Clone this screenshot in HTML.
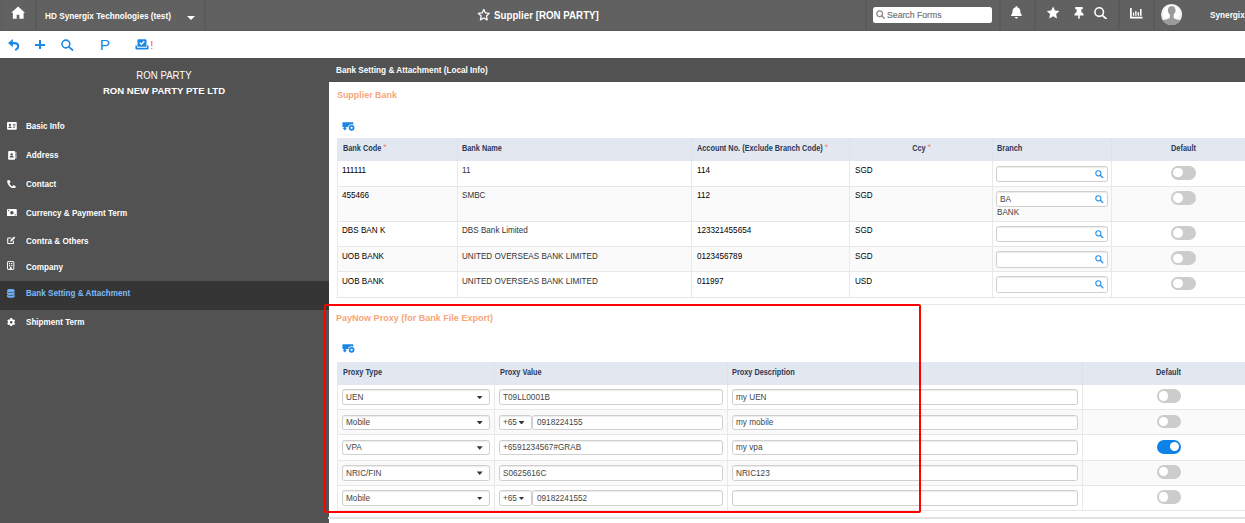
<!DOCTYPE html>
<html><head><meta charset="utf-8">
<style>
*{box-sizing:border-box;margin:0;padding:0}
html,body{width:1245px;height:523px;overflow:hidden;background:#fff;font-family:"Liberation Sans",sans-serif;}
.abs{position:absolute}
#top{left:0;top:0;width:1245px;height:30.700px;background:#616161;border-bottom:1.200px solid #5a5a5a}
.vd{position:absolute;top:0;width:2px;height:30.700px;background:#5a5a5a}
.tt{position:absolute;color:#fff;font-weight:bold;white-space:nowrap;transform-origin:0 50%}
#side{left:0;top:58px;width:328.700px;height:465px;background:#525252}
.mi{position:absolute;left:25.600px;color:#fff;font-weight:bold;font-size:9px;white-space:nowrap;transform-origin:0 50%;transform:scaleX(.90);line-height:12px}
#hdr{left:328px;top:58px;width:917px;height:24.400px;background:#525252}
table{border-collapse:collapse;position:absolute;table-layout:fixed;font-size:9px;color:#222}
th{background:#e3e7f0;color:#1f2d4d;font-weight:bold;text-align:left;font-size:8.5px;padding:0 0 0 5px;vertical-align:middle}
td{border:1px solid #e4e4e4;vertical-align:top;padding:5px 0 0 5px;font-size:8.5px;color:#111}
tr.alt td{background:#fafafa}
.req{color:#e53935;font-weight:normal;font-size:7px;vertical-align:1px}
.inp{position:absolute;border:1px solid #c9c9c9;border-radius:2px;background:#fff;box-shadow:inset 0 1px 1px rgba(0,0,0,.08);font-size:8.5px;color:#222;line-height:14px;padding-left:4px;white-space:nowrap}
.tg{position:absolute;width:25px;height:13px;border-radius:7px;background:#ccc}
.tg:after{content:"";position:absolute;left:1.5px;top:1.5px;width:10px;height:10px;border-radius:5px;background:#fff}
.tg.on{background:#1e88e5}
.tg.on:after{left:13.5px}
.car{position:absolute;width:0;height:0;border-left:3px solid transparent;border-right:3px solid transparent;border-top:3.5px solid #222}
</style><style>
.t,.th,.td{white-space:nowrap;line-height:11px;transform-origin:0 50%}
.th{font-size:8.200px;font-weight:bold;color:#2a3757;transform:scaleX(.895)}
.th .req{font-size:9px;color:#f2777a;line-height:0;position:relative;top:-1.500px;vertical-align:baseline;font-weight:normal}
.td{font-size:8.500px;color:#333;transform:scaleX(.955)}
.td.b{color:#000}
.inp span{transform-origin:0 50%;transform:scaleX(.965);line-height:11px}
.inp{border-radius:2.500px;border-color:#cfcfcf}
.tg:after{left:2.200px;top:2.200px;width:9.400px;height:9.400px}
.tg.on{background:#0f82e8}
.tg.on:after{left:13.100px}
.car2{position:absolute;width:6px;height:3.500px;background:#333;clip-path:polygon(0 0,100% 0,50% 100%)}
.inp{color:#444}
.car{border-left-width:2.900px;border-right-width:2.900px;border-top-width:3.300px;border-top-color:#333}
</style></head><body>
<!-- TOP BAR -->
<div id="top" class="abs">
 <div class="vd" style="left:35px;width:1.500px"></div><div class="vd" style="left:0.700px;width:1px;background:#5c5c5c"></div><div class="vd" style="left:204px"></div>
 <div class="vd" style="left:864.6px"></div><div class="vd" style="left:998.6px"></div><div class="vd" style="left:1033.7px"></div><div class="vd" style="left:1117.6px"></div><div class="vd" style="left:1153px"></div>
 <svg class="abs" style="left:11.200px;top:6.300px" width="14.200" height="12.800" viewBox="0 0 14.200 12.800"><path fill="#fff" d="M7.100 .5 L.2 6.700 H1.900 V12.700 H5.700 V8.800 H8.400 V12.700 H12.600 V6.700 H14 Z"/></svg>
 <div class="tt" style="left:45.200px;top:9.800px;font-size:10px;line-height:12px;transform:scale(.822,.92)">HD Synergix Technologies (test)</div>
 <div class="abs" style="left:186.5px;top:15.500px;width:0;height:0;border-left:4px solid transparent;border-right:4px solid transparent;border-top:4.500px solid #fff"></div>
 <svg class="abs" style="left:476.600px;top:8.100px" width="13.600" height="13.600" viewBox="0 0 24 24"><path fill="none" stroke="#fff" stroke-width="2.200" stroke-linejoin="round" d="M12 2.500l2.900 6.200 6.800.8-5 4.700 1.300 6.700L12 17.600l-6 3.300 1.300-6.700-5-4.700 6.800-.8z"/></svg>
 <div class="tt" style="left:493.5px;top:9px;font-size:10.5px;line-height:13px;transform:scaleX(.928)">Supplier [RON PARTY]</div>
 <div class="abs" style="left:873px;top:7.100px;width:119px;height:15.500px;background:#fff;border-radius:2.500px"></div>
 <svg class="abs" style="left:875.700px;top:10.200px" width="9" height="9" viewBox="0 0 9 9"><circle cx="3.700" cy="3.700" r="2.900" fill="none" stroke="#858585" stroke-width="1.300"/><path d="M5.900 5.900 8.200 8.300" stroke="#858585" stroke-width="1.300" stroke-linecap="round"/></svg>
 <div class="abs" style="left:887.300px;top:8.800px;font-size:9.500px;line-height:12px;color:#707070;transform-origin:0 50%;transform:scaleX(.915);white-space:nowrap;-webkit-text-stroke:.15px #707070">Search Forms</div>
 <!-- bell -->
 <svg class="abs" style="left:1010.900px;top:6.300px" width="10.800" height="12.500" viewBox="0 0 448 512"><path fill="#fff" d="M224 512c35 0 64-29 64-64H160c0 35 29 64 64 64zm215-150c-19-21-55-52-55-154 0-78-54-140-128-155V32a32 32 0 1 0-64 0v21C118 68 64 130 64 208c0 102-36 133-55 154-6 6-9 14-9 22 0 16 13 32 32 32h384c19 0 32-16 32-32 0-8-3-16-9-22z"/></svg>
 <!-- star -->
 <svg class="abs" style="left:1046.100px;top:6.300px" width="14.200" height="13.200" viewBox="0 0 24 23"><path fill="#fff" d="M12 .8l3.300 7 7.700.9-5.700 5.300 1.500 7.600L12 17.800l-6.800 3.800 1.500-7.600L1 8.700l7.700-.9z"/></svg>
 <!-- pin -->
 <svg class="abs" style="left:1073.800px;top:6.800px" width="10" height="12.300" viewBox="0 0 384 512"><path fill="#fff" d="M298 214 285 96h43c13 0 24-11 24-24V24c0-13-11-24-24-24H56C43 0 32 11 32 24v48c0 13 11 24 24 24h43L86 214C37 237 0 278 0 328c0 13 11 24 24 24h136v104c0 1 0 3 1 4l24 48c3 6 11 6 14 0l24-48c1-1 1-3 1-4V352h136c13 0 24-11 24-24 0-51-38-91-86-114z"/></svg>
 <!-- search -->
 <svg class="abs" style="left:1094.200px;top:7.200px" width="12.600" height="12.200" viewBox="0 0 12.600 12.200"><circle cx="5.200" cy="5.100" r="4.300" fill="none" stroke="#fff" stroke-width="1.550"/><path d="M8.400 8.300 12 11.600" stroke="#fff" stroke-width="1.800" stroke-linecap="round"/></svg>
 <!-- chart -->
 <svg class="abs" style="left:1130px;top:8px" width="12.500" height="10.500" viewBox="0 0 25 21"><path fill="none" stroke="#fff" stroke-width="3.400" d="M1.800 0v19.200H25"/><path fill="#fff" d="M5.800 9h2.600v6.400H5.800zM10.400 5.800h2.600v9.600h-2.600zM15.200 8.400h3v7h-3zM20 2h3.200v13.400H20z"/></svg>
 <!-- avatar -->
 <svg class="abs" style="left:1161.100px;top:4.400px" width="21.100" height="21.100" viewBox="0 0 42 42"><defs><clipPath id="c"><circle cx="21" cy="21" r="21"/></clipPath><radialGradient id="g" cx="50%" cy="45%" r="55%"><stop offset="60%" stop-color="#fff"/><stop offset="100%" stop-color="#e4e4e4"/></radialGradient></defs><circle cx="21" cy="21" r="21" fill="url(#g)"/><g clip-path="url(#c)" fill="#9a9a9a"><ellipse cx="21.300" cy="12.700" rx="7.700" ry="8.900"/><path d="M17.400 17h7.800v10.500c1 2.500 8 3.200 13.300 5.500V44H3.500V33c5.300-2.300 12.900-3 13.900-5.500z"/></g></svg>
 <div class="tt" style="left:1209.800px;top:8.800px;font-size:10px;line-height:12px;transform:scale(.822,.92)">Synergix</div>
</div>
<!-- TOOLBAR -->
<svg class="abs" style="left:8px;top:39px" width="12" height="11.500" viewBox="0 0 12 11.500"><path fill="#1e88e5" d="M0 4.100 4.900 0v8.200z"/><path d="M4.500 4.100H6.300C9.300 4.100 10.200 6 10.200 7.300 10.200 8.800 9.300 9.900 7.900 10.600" fill="none" stroke="#1e88e5" stroke-width="2.100" stroke-linecap="round"/></svg>
<div class="abs" style="left:35.300px;top:44.200px;width:9.700px;height:1.500px;background:#1e88e5"></div><div class="abs" style="left:39.400px;top:40.300px;width:1.500px;height:9.200px;background:#1e88e5"></div>
<svg class="abs" style="left:60.500px;top:39px" width="13" height="12" viewBox="0 0 13 12"><circle cx="4.900" cy="5" r="3.900" fill="none" stroke="#1e88e5" stroke-width="1.600"/><path d="M7.800 7.800 11.500 11" stroke="#1e88e5" stroke-width="1.700" stroke-linecap="round"/></svg>
<div class="abs" style="left:99.700px;top:37.200px;font-size:15.500px;line-height:16px;color:#1e88e5">P</div>
<svg class="abs" style="left:134.500px;top:38.800px" width="14" height="11" viewBox="0 0 14 11"><rect x="2.500" y="0.200" width="9" height="7.500" rx="1" fill="#1e88e5"/><path d="M1.300 6.500V9.600H12.700V6.500" fill="none" stroke="#1e88e5" stroke-width="1.700" stroke-linejoin="round"/><path d="M4.800 3.600 6.400 5.200 9.300 2.200" fill="none" stroke="#fff" stroke-width="1.300"/></svg>
<div class="abs" style="left:150.200px;top:39.500px;font-size:11px;line-height:11px;color:#ef5350">!</div>
<!-- SIDEBAR -->
<div id="side" class="abs">
 <div class="abs" style="left:0;top:11.700px;width:328px;text-align:center;color:#fff;font-size:10px;line-height:12px;transform:scaleX(.962)">RON PARTY</div>
 <div class="abs" style="left:0;top:26.700px;width:328px;text-align:center;color:#fff;font-size:9.500px;line-height:12px;font-weight:bold;transform:scaleX(1.006)">RON NEW PARTY PTE LTD</div>
 <div class="abs" style="left:0;top:222.600px;width:328.700px;height:29px;background:#353535"></div>
 <div class="mi" style="top:62.200px">Basic Info</div>
 <div class="mi" style="top:90.500px">Address</div>
 <div class="mi" style="top:120px">Contact</div>
 <div class="mi" style="top:148.500px">Currency &amp; Payment Term</div>
 <div class="mi" style="top:177.100px">Contra &amp; Others</div>
 <div class="mi" style="top:202.900px">Company</div>
 <div class="mi" style="top:229.400px;color:#7cbcf7">Bank Setting &amp; Attachment</div>
 <div class="mi" style="top:258px;left:26.300px">Shipment Term</div>
</div>
<!-- MAIN -->
<div id="hdr" class="abs"><div class="tt" style="left:7.800px;top:5.600px;font-size:9px;line-height:12px;transform:scaleX(.911)">Bank Setting &amp; Attachment (Local Info)</div></div>
<div class="abs" style="left:337px;top:88.400px;font-size:9.500px;line-height:13px;color:#f7a67a;font-weight:bold;transform-origin:0 50%;transform:scaleX(.937);white-space:nowrap">Supplier Bank</div>
<div class="abs" style="left:336.300px;top:310.700px;font-size:9.500px;line-height:13px;color:#f7a67a;font-weight:bold;transform-origin:0 50%;transform:scaleX(.95);white-space:nowrap">PayNow Proxy (for Bank File Export)</div>
<svg class="abs" style="left:341.5px;top:121.5px" width="13" height="9" viewBox="0 0 13 9"><rect x=".4" y=".2" width="10.900" height="4.700" rx=".6" fill="#1a86e8"/><circle cx="9.600" cy="5.800" r="3.600" fill="#fff"/><circle cx="9.600" cy="5.800" r="2" fill="none" stroke="#1a86e8" stroke-width="1.700"/><path d="M.5 5.700H5L2.750 8.600z" fill="#1a86e8"/><rect x="2" y="4.500" width="1.500" height="1.500" fill="#1a86e8"/></svg>
<svg class="abs" style="left:341.6px;top:343.7px" width="13" height="9" viewBox="0 0 13 9"><rect x=".4" y=".2" width="10.900" height="4.700" rx=".6" fill="#1a86e8"/><circle cx="9.600" cy="5.800" r="3.600" fill="#fff"/><circle cx="9.600" cy="5.800" r="2" fill="none" stroke="#1a86e8" stroke-width="1.700"/><path d="M.5 5.700H5L2.750 8.600z" fill="#1a86e8"/><rect x="2" y="4.500" width="1.500" height="1.500" fill="#1a86e8"/></svg>
<div class="abs " style="left:328px;top:304px;width:917px;height:1px;background:#e6e6e6"></div>
<div class="abs " style="left:337.1px;top:138.1px;width:907.9px;height:22.80000000000001px;background:#e3e7f0"></div>
<div class="abs " style="left:337.1px;top:160.9px;width:907.9px;height:25.19999999999999px;background:#fff"></div>
<div class="abs " style="left:337.1px;top:186.1px;width:907.9px;height:35.0px;background:#fafafa"></div>
<div class="abs " style="left:337.1px;top:221.1px;width:907.9px;height:25.30000000000001px;background:#fff"></div>
<div class="abs " style="left:337.1px;top:246.4px;width:907.9px;height:25.299999999999983px;background:#fafafa"></div>
<div class="abs " style="left:337.1px;top:271.7px;width:907.9px;height:25.30000000000001px;background:#fff"></div>
<div class="abs " style="left:337.1px;top:185.6px;width:907.9px;height:1px;background:#e7e7e7"></div>
<div class="abs " style="left:337.1px;top:220.6px;width:907.9px;height:1px;background:#e7e7e7"></div>
<div class="abs " style="left:337.1px;top:245.9px;width:907.9px;height:1px;background:#e7e7e7"></div>
<div class="abs " style="left:337.1px;top:271.2px;width:907.9px;height:1px;background:#e7e7e7"></div>
<div class="abs " style="left:337.1px;top:296.5px;width:907.9px;height:1px;background:#e7e7e7"></div>
<div class="abs " style="left:337.1px;top:160.9px;width:1px;height:136.1px;background:#e9e9e9"></div>
<div class="abs " style="left:456.8px;top:160.9px;width:1px;height:136.1px;background:#e9e9e9"></div>
<div class="abs " style="left:690.8px;top:160.9px;width:1px;height:136.1px;background:#e9e9e9"></div>
<div class="abs " style="left:848.6px;top:160.9px;width:1px;height:136.1px;background:#e9e9e9"></div>
<div class="abs " style="left:991.8px;top:160.9px;width:1px;height:136.1px;background:#e9e9e9"></div>
<div class="abs " style="left:1110.8px;top:160.9px;width:1px;height:136.1px;background:#e9e9e9"></div>
<div class="abs " style="left:456.8px;top:138.1px;width:1px;height:22.80000000000001px;background:#dde1ea"></div>
<div class="abs " style="left:690.8px;top:138.1px;width:1px;height:22.80000000000001px;background:#dde1ea"></div>
<div class="abs " style="left:848.6px;top:138.1px;width:1px;height:22.80000000000001px;background:#dde1ea"></div>
<div class="abs " style="left:991.8px;top:138.1px;width:1px;height:22.80000000000001px;background:#dde1ea"></div>
<div class="abs " style="left:1110.8px;top:138.1px;width:1px;height:22.80000000000001px;background:#dde1ea"></div>
<div class="abs th" style="left:342.6px;top:143.0px;">Bank Code <span class="req">*</span></div>
<div class="abs th" style="left:461.9px;top:143.0px;">Bank Name</div>
<div class="abs th" style="left:696.7px;top:143.0px;">Account No. (Exclude Branch Code) <span class="req">*</span></div>
<div class="abs th" style="left:849.5px;top:143.0px;width:143px;text-align:center;transform-origin:50% 50%">Ccy <span class="req">*</span></div>
<div class="abs th" style="left:997.1px;top:143.0px;">Branch</div>
<div class="abs th" style="left:1112px;top:143.0px;width:143px;text-align:center;transform-origin:50% 50%">Default</div>
<div class="abs td b" style="left:342.2px;top:165.20000000000002px;">111111</div>
<div class="abs td" style="left:461.9px;top:165.20000000000002px;">11</div>
<div class="abs td b" style="left:696.7px;top:165.20000000000002px;">114</div>
<div class="abs td b" style="left:854.8px;top:165.20000000000002px;">SGD</div>
<div class="abs inp" style="left:996.1px;top:165.5px;width:112.4px;height:16.5px;"><span style="position:absolute;left:3.200px;top:2.600px"></span><svg class="abs" style="right:3.800px;top:3px" width="8.500" height="8.500" viewBox="0 0 24 24"><circle cx="9.500" cy="9.500" r="7.300" fill="none" stroke="#2a8fe8" stroke-width="3"/><path d="M15 15 22 22" stroke="#2a8fe8" stroke-width="3.800" stroke-linecap="round"/></svg></div>
<div class="abs tg" style="left:1171.2px;top:165.9px;width:24.6px;height:13.8px;"></div>
<div class="abs td b" style="left:342.2px;top:190.4px;">455466</div>
<div class="abs td" style="left:461.9px;top:190.4px;">SMBC</div>
<div class="abs td b" style="left:696.7px;top:190.4px;">112</div>
<div class="abs td b" style="left:854.8px;top:190.4px;">SGD</div>
<div class="abs inp" style="left:996.1px;top:190.7px;width:112.4px;height:16.5px;"><span style="position:absolute;left:3.200px;top:2.600px">BA</span><svg class="abs" style="right:3.800px;top:3px" width="8.500" height="8.500" viewBox="0 0 24 24"><circle cx="9.500" cy="9.500" r="7.300" fill="none" stroke="#2a8fe8" stroke-width="3"/><path d="M15 15 22 22" stroke="#2a8fe8" stroke-width="3.800" stroke-linecap="round"/></svg></div>
<div class="abs tg" style="left:1171.2px;top:191.1px;width:24.6px;height:13.8px;"></div>
<div class="abs td b" style="left:342.2px;top:225.4px;">DBS BAN K</div>
<div class="abs td" style="left:461.9px;top:225.4px;">DBS Bank Limited</div>
<div class="abs td b" style="left:696.7px;top:225.4px;">123321455654</div>
<div class="abs td b" style="left:854.8px;top:225.4px;">SGD</div>
<div class="abs inp" style="left:996.1px;top:225.7px;width:112.4px;height:16.5px;"><span style="position:absolute;left:3.200px;top:2.600px"></span><svg class="abs" style="right:3.800px;top:3px" width="8.500" height="8.500" viewBox="0 0 24 24"><circle cx="9.500" cy="9.500" r="7.300" fill="none" stroke="#2a8fe8" stroke-width="3"/><path d="M15 15 22 22" stroke="#2a8fe8" stroke-width="3.800" stroke-linecap="round"/></svg></div>
<div class="abs tg" style="left:1171.2px;top:226.1px;width:24.6px;height:13.8px;"></div>
<div class="abs td b" style="left:342.2px;top:250.70000000000002px;">UOB BANK</div>
<div class="abs td" style="left:461.9px;top:250.70000000000002px;">UNITED OVERSEAS BANK LIMITED</div>
<div class="abs td b" style="left:696.7px;top:250.70000000000002px;">0123456789</div>
<div class="abs td b" style="left:854.8px;top:250.70000000000002px;">SGD</div>
<div class="abs inp" style="left:996.1px;top:251.0px;width:112.4px;height:16.5px;"><span style="position:absolute;left:3.200px;top:2.600px"></span><svg class="abs" style="right:3.800px;top:3px" width="8.500" height="8.500" viewBox="0 0 24 24"><circle cx="9.500" cy="9.500" r="7.300" fill="none" stroke="#2a8fe8" stroke-width="3"/><path d="M15 15 22 22" stroke="#2a8fe8" stroke-width="3.800" stroke-linecap="round"/></svg></div>
<div class="abs tg" style="left:1171.2px;top:251.4px;width:24.6px;height:13.8px;"></div>
<div class="abs td b" style="left:342.2px;top:276.0px;">UOB BANK</div>
<div class="abs td" style="left:461.9px;top:276.0px;">UNITED OVERSEAS BANK LIMITED</div>
<div class="abs td b" style="left:696.7px;top:276.0px;">011997</div>
<div class="abs td b" style="left:854.8px;top:276.0px;">USD</div>
<div class="abs inp" style="left:996.1px;top:276.3px;width:112.4px;height:16.5px;"><span style="position:absolute;left:3.200px;top:2.600px"></span><svg class="abs" style="right:3.800px;top:3px" width="8.500" height="8.500" viewBox="0 0 24 24"><circle cx="9.500" cy="9.500" r="7.300" fill="none" stroke="#2a8fe8" stroke-width="3"/><path d="M15 15 22 22" stroke="#2a8fe8" stroke-width="3.800" stroke-linecap="round"/></svg></div>
<div class="abs tg" style="left:1171.2px;top:276.7px;width:24.6px;height:13.8px;"></div>
<div class="abs td" style="left:997.1px;top:206.7px;color:#444">BANK</div>
<div class="abs " style="left:337.1px;top:361.6px;width:907.9px;height:23.0px;background:#e3e7f0"></div>
<div class="abs " style="left:337.1px;top:384.6px;width:907.9px;height:25.099999999999966px;background:#fff"></div>
<div class="abs " style="left:337.1px;top:409.7px;width:907.9px;height:25.19999999999999px;background:#fafafa"></div>
<div class="abs " style="left:337.1px;top:434.9px;width:907.9px;height:25.200000000000045px;background:#fff"></div>
<div class="abs " style="left:337.1px;top:460.1px;width:907.9px;height:25.299999999999955px;background:#fafafa"></div>
<div class="abs " style="left:337.1px;top:485.4px;width:907.9px;height:25.100000000000023px;background:#fff"></div>
<div class="abs " style="left:337.1px;top:409.2px;width:907.9px;height:1px;background:#e7e7e7"></div>
<div class="abs " style="left:337.1px;top:434.4px;width:907.9px;height:1px;background:#e7e7e7"></div>
<div class="abs " style="left:337.1px;top:459.6px;width:907.9px;height:1px;background:#e7e7e7"></div>
<div class="abs " style="left:337.1px;top:484.9px;width:907.9px;height:1px;background:#e7e7e7"></div>
<div class="abs " style="left:337.1px;top:510.0px;width:907.9px;height:1px;background:#e7e7e7"></div>
<div class="abs " style="left:337.1px;top:384.6px;width:1px;height:125.89999999999998px;background:#e9e9e9"></div>
<div class="abs " style="left:494.1px;top:384.6px;width:1px;height:125.89999999999998px;background:#e9e9e9"></div>
<div class="abs " style="left:727.3px;top:384.6px;width:1px;height:125.89999999999998px;background:#e9e9e9"></div>
<div class="abs " style="left:1081.8px;top:384.6px;width:1px;height:125.89999999999998px;background:#e9e9e9"></div>
<div class="abs " style="left:494.1px;top:361.6px;width:1px;height:23.0px;background:#dde1ea"></div>
<div class="abs " style="left:727.3px;top:361.6px;width:1px;height:23.0px;background:#dde1ea"></div>
<div class="abs " style="left:1081.8px;top:361.6px;width:1px;height:23.0px;background:#dde1ea"></div>
<div class="abs th" style="left:342.9px;top:366.6px;">Proxy Type</div>
<div class="abs th" style="left:499.8px;top:366.6px;">Proxy Value</div>
<div class="abs th" style="left:732.3px;top:366.6px;">Proxy Description</div>
<div class="abs th" style="left:1082.4px;top:366.6px;width:173px;text-align:center;transform-origin:50% 50%">Default</div>
<div class="abs inp" style="left:342.1px;top:389.3px;width:147.8px;height:15.6px;"><span style="position:absolute;left:3.200px;top:1.600px">UEN</span><i class="car2" style="right:6.2px;top:5.400px"></i></div>
<div class="abs inp" style="left:499.3px;top:389.3px;width:223.7px;height:15.6px;"><span style="position:absolute;left:3.200px;top:1.600px">T09LL0001B</span></div>
<div class="abs inp" style="left:731.8px;top:389.3px;width:346px;height:15.6px;"><span style="position:absolute;left:3.200px;top:1.600px">my UEN</span></div>
<div class="abs tg" style="left:1156.7px;top:389.2px;width:24.7px;height:13.9px;"></div>
<div class="abs inp" style="left:342.1px;top:414.6px;width:147.8px;height:15.6px;"><span style="position:absolute;left:3.200px;top:1.600px">Mobile</span><i class="car2" style="right:6.2px;top:5.400px"></i></div>
<div class="abs inp" style="left:499.3px;top:414.6px;width:32.8px;height:15.6px;"><span style="position:absolute;left:3.200px;top:1.600px">+65</span><i class="car2" style="right:6.6px;top:5.400px"></i></div>
<div class="abs inp" style="left:532.4px;top:414.6px;width:190.6px;height:15.6px;"><span style="position:absolute;left:3.200px;top:1.600px">0918224155</span></div>
<div class="abs inp" style="left:731.8px;top:414.6px;width:346px;height:15.6px;"><span style="position:absolute;left:3.200px;top:1.600px">my mobile</span></div>
<div class="abs tg" style="left:1156.7px;top:414.5px;width:24.7px;height:13.9px;"></div>
<div class="abs inp" style="left:342.1px;top:439.8px;width:147.8px;height:15.6px;"><span style="position:absolute;left:3.200px;top:1.600px">VPA</span><i class="car2" style="right:6.2px;top:5.400px"></i></div>
<div class="abs inp" style="left:499.3px;top:439.8px;width:223.7px;height:15.6px;"><span style="position:absolute;left:3.200px;top:1.600px">+6591234567#GRAB</span></div>
<div class="abs inp" style="left:731.8px;top:439.8px;width:346px;height:15.6px;"><span style="position:absolute;left:3.200px;top:1.600px">my vpa</span></div>
<div class="abs tg on" style="left:1156.7px;top:439.7px;width:24.7px;height:13.9px;"></div>
<div class="abs inp" style="left:342.1px;top:465px;width:147.8px;height:15.6px;"><span style="position:absolute;left:3.200px;top:1.600px">NRIC/FIN</span><i class="car2" style="right:6.2px;top:5.400px"></i></div>
<div class="abs inp" style="left:499.3px;top:465px;width:223.7px;height:15.6px;"><span style="position:absolute;left:3.200px;top:1.600px">S0625616C</span></div>
<div class="abs inp" style="left:731.8px;top:465px;width:346px;height:15.6px;"><span style="position:absolute;left:3.200px;top:1.600px">NRIC123</span></div>
<div class="abs tg" style="left:1156.7px;top:464.9px;width:24.7px;height:13.9px;"></div>
<div class="abs inp" style="left:342.1px;top:490.2px;width:147.8px;height:15.6px;"><span style="position:absolute;left:3.200px;top:1.600px">Mobile</span><i class="car2" style="right:6.2px;top:5.400px"></i></div>
<div class="abs inp" style="left:499.3px;top:490.2px;width:32.8px;height:15.6px;"><span style="position:absolute;left:3.200px;top:1.600px">+65</span><i class="car2" style="right:6.6px;top:5.400px"></i></div>
<div class="abs inp" style="left:532.4px;top:490.2px;width:190.6px;height:15.6px;"><span style="position:absolute;left:3.200px;top:1.600px">09182241552</span></div>
<div class="abs inp" style="left:731.8px;top:490.2px;width:346px;height:15.6px;"><span style="position:absolute;left:3.200px;top:1.600px"></span></div>
<div class="abs tg" style="left:1156.7px;top:490.09999999999997px;width:24.7px;height:13.9px;"></div>
<div class="abs " style="left:328px;top:517.2px;width:917px;height:1.4px;background:#e3e3e3"></div>
<div class="abs " style="left:323.6px;top:304.4px;width:597.6px;height:208.7px;border:2.400px solid #ff0000;border-radius:2px"></div>
<svg class="abs" style="left:7.4px;top:122.4px" width="9.8" height="7.8" viewBox="0 0 20 16"><rect width="20" height="16" rx="2" fill="#fff"/><circle cx="6" cy="6" r="2.300" fill="#525252"/><path d="M2.500 12.500c0-2.500 1.500-3.500 3.500-3.500s3.500 1 3.500 3.500z" fill="#525252"/><path d="M12 5h5.500M12 8h5.500M12 11h4" stroke="#525252" stroke-width="1.500"/></svg>
<svg class="abs" style="left:8px;top:150.8px" width="8.6" height="8.8" viewBox="0 0 17 18"><rect width="14.500" height="18" rx="2" fill="#fff"/><path d="M15 3h2v3h-2zM15 7.500h2v3h-2zM15 12h2v3h-2z" fill="#fff"/><circle cx="7.200" cy="6.800" r="2.400" fill="#525252"/><path d="M3 13.500c0-2.600 1.800-3.600 4.200-3.600s4.200 1 4.200 3.600z" fill="#525252"/></svg>
<svg class="abs" style="left:7.4px;top:179.6px" width="8.8" height="8.6" viewBox="0 0 512 512"><path fill="#fff" d="M497 361 385 313a24 24 0 0 0-28 7l-50 61A371 371 0 0 1 131 204l61-50a24 24 0 0 0 7-28L151 14A24 24 0 0 0 123 1L19 25A24 24 0 0 0 0 48c0 256 208 464 464 464a24 24 0 0 0 23-19l24-104a24 24 0 0 0-14-28z" transform="matrix(1 0 0 1 0 0)"/></svg>
<svg class="abs" style="left:7.4px;top:209px" width="9.8" height="7.4" viewBox="0 0 20 15"><rect width="20" height="15" rx="1.500" fill="#fff"/><circle cx="10" cy="7.500" r="3.600" fill="#525252"/><rect x="2" y="2" width="2.500" height="2" fill="#525252"/><rect x="15.500" y="11" width="2.500" height="2" fill="#525252"/></svg>
<svg class="abs" style="left:7.4px;top:236px" width="8.8" height="8.4" viewBox="0 0 18 17"><path d="M13 9.500V14a1.500 1.500 0 0 1-1.500 1.500H3A1.500 1.500 0 0 1 1.500 14V5.500A1.500 1.500 0 0 1 3 4h6" fill="none" stroke="#fff" stroke-width="2.200"/><path d="M6.500 11.500l.6-3.200L14.300 1l2.600 2.600-7.200 7.300z" fill="#fff"/></svg>
<svg class="abs" style="left:7.4px;top:261.2px" width="7.3" height="9" viewBox="0 0 15 18"><rect x="1" y="1" width="13" height="16" rx="1" fill="none" stroke="#fff" stroke-width="2"/><path d="M4 4h2.500v2.500H4zM8.500 4H11v2.500H8.500zM4 8h2.500v2.500H4zM8.500 8H11v2.500H8.500zM5.500 17v-3.500a2 2 0 0 1 4 0V17z" fill="#fff"/></svg>
<svg class="abs" style="left:7.4px;top:289.1px" width="7.7" height="8.9" viewBox="0 0 448 512"><path fill="#6eb0f4" d="M448 73v46c0 40-100 73-224 73S0 159 0 119V73C0 33 100 0 224 0s224 33 224 73zm0 103v103c0 40-100 73-224 73S0 319 0 279V176c48 33 136 49 224 49s176-16 224-49zm0 160v103c0 40-100 73-224 73S0 479 0 439V336c48 33 136 49 224 49s176-16 224-49z"/></svg>
<svg class="abs" style="left:7.4px;top:318px" width="8.4" height="8.4" viewBox="0 0 512 512"><path fill="#fff" d="M487 316l-43-25c4-23 4-47 0-70l43-25c5-3 7-9 5-14-11-36-30-68-54-95-4-4-10-5-15-2l-43 25c-18-15-39-27-61-35V25c0-6-4-11-10-12-37-8-74-8-110 0-5 1-9 6-9 12v50c-22 8-43 20-61 35L86 85c-5-3-11-2-15 2-25 27-43 59-54 95-2 5 0 11 5 14l43 25c-4 23-4 47 0 70l-43 25c-5 3-7 9-5 14 11 36 30 68 54 95 4 4 10 5 15 2l43-25c18 15 39 27 61 35v50c0 6 4 11 10 12 37 8 74 8 110 0 5-1 10-6 10-12v-50c22-8 43-20 61-35l43 25c5 3 11 2 15-2 25-27 43-59 54-95 2-5 0-11-5-14zM256 336c-44 0-80-36-80-80s36-80 80-80 80 36 80 80-36 80-80 80z"/></svg>
</body></html>
